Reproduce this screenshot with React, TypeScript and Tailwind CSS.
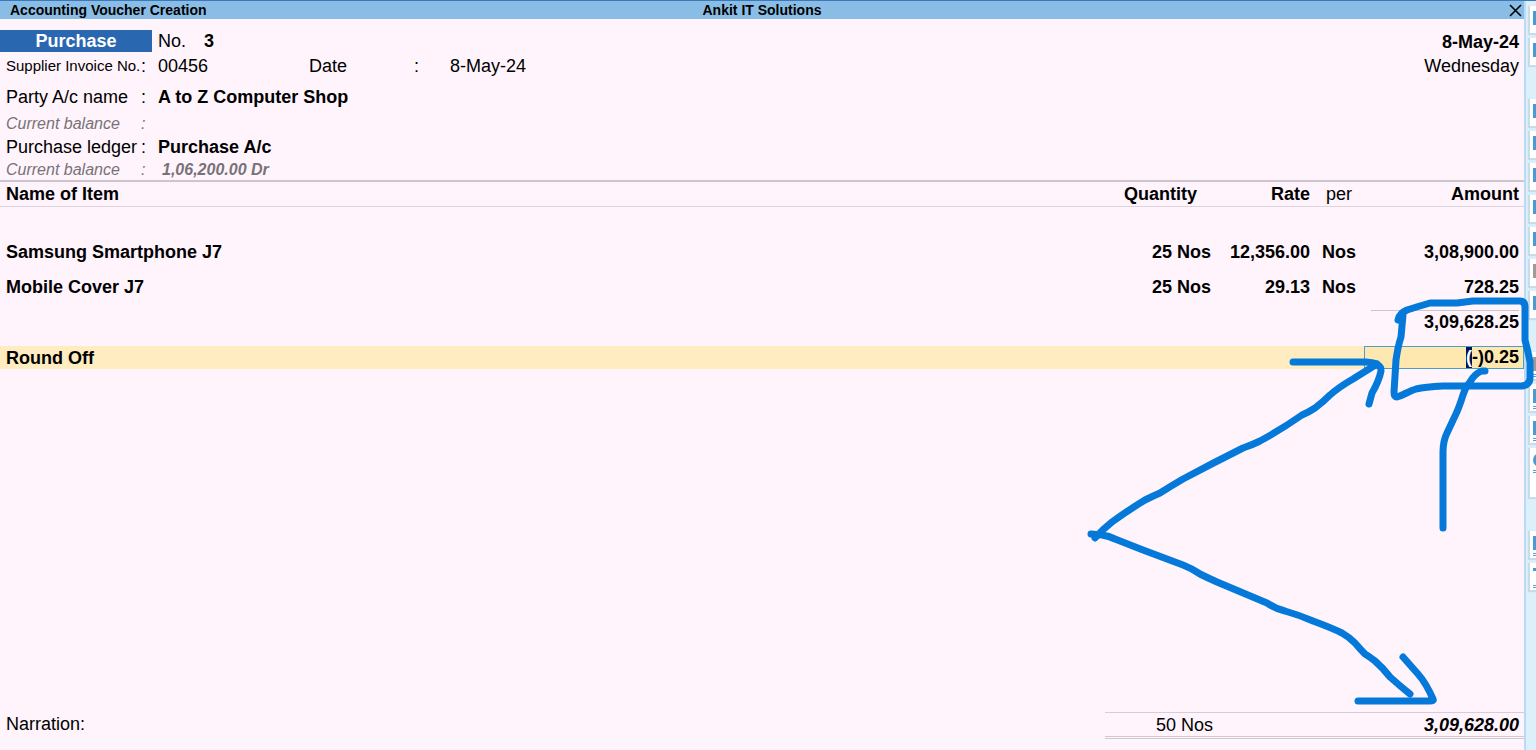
import { useEffect, useRef } from 'react'
import { clsx } from 'clsx'

type Item = {
  name: string
  quantity: string
  rate: string
  per: string
  amount: string
}

type Shortcut = {
  label: string
  className?: string
  icon?: 'bar' | 'muted' | 'round' | 'dash'
  underlined?: boolean
}

const items: Item[] = [
  { name: 'Samsung Smartphone J7', quantity: '25 Nos', rate: '12,356.00', per: 'Nos', amount: '3,08,900.00' },
  { name: 'Mobile Cover J7', quantity: '25 Nos', rate: '29.13', per: 'Nos', amount: '728.25' },
]

const shortcuts: Shortcut[] = [
  { label: 'Date' },
  { label: 'Company' },
  { label: 'Contra', className: 'mt-[29px]' },
  { label: 'Payment' },
  { label: 'Receipt' },
  { label: 'Journal' },
  { label: 'Sales' },
  { label: 'Purchase', icon: 'muted' },
  { label: 'Other vouchers' },
  { label: 'Autofill', className: 'mt-[29px]', icon: 'muted', underlined: true },
  { label: 'Change mode', underlined: true },
  { label: 'More details', underlined: true },
  { label: 'Optional', className: 'h-[49px]', icon: 'round', underlined: true },
  { label: 'Post-dated', className: 'mt-[29px]', underlined: true },
  { label: 'Stock query', icon: 'dash', underlined: true },
]

const inputClass = 'min-w-0 bg-transparent p-0 outline-none'

function ShortcutBar() {
  return (
    <aside className="flex w-3 shrink-0 flex-col gap-[5px] overflow-hidden border-l-2 border-[#bbdaf3] bg-[#dcf0fc] pt-[5px] pl-1">
      {shortcuts.map(({ label, className, icon = 'bar', underlined }) => (
        <button
          key={label}
          type="button"
          aria-label={label}
          className={clsx(
            'flex w-24 shrink-0 flex-col bg-white pt-[5px] pl-[3px] shadow-[-1px_1px_1px_1px_#c9dbe6]',
            className,
            className !== 'h-[49px]' && 'h-[27px]',
          )}
        >
          <span
            className={clsx(
              'block',
              icon === 'bar' && 'h-3.5 w-2 bg-[#4a9ad4]',
              icon === 'muted' && 'h-3.5 w-2 bg-[#a09b9b]',
              icon === 'round' && 'h-3.5 w-3.5 rounded-full bg-[#4a9ad4]',
              icon === 'dash' && 'mb-[11px] h-[3px] w-2 bg-[#4a9ad4]',
            )}
          />
          {underlined && <span className="mt-[3px] block h-[3px] w-20 border-y border-[#4fa3dc]" />}
        </button>
      ))}
    </aside>
  )
}

function Annotations() {
  return (
    <svg
      className="pointer-events-none absolute top-[289px] right-0"
      width="456"
      height="430"
      viewBox="1080 290 456 430"
      fill="none"
      stroke="#0579da"
      strokeWidth="7"
      strokeLinecap="round"
      strokeLinejoin="round"
      aria-hidden="true"
    >
      <path d="M1398 320C1399 314 1403 312 1407 310C1416 307 1423 305 1430 303H1457L1473 301H1520Q1525 301 1525 307V340Q1528 351 1530 362V378Q1530 385 1522 386H1443Q1425 387 1416 389C1409 391 1404 395 1397 397Q1394 397 1394 392L1396 360Q1398 346 1401 337L1403 315" />
      <path d="M1293 362H1366Q1382 363 1381 371Q1379 381 1372 393L1369 404" />
      <path d="M1095 538Q1103 529 1112 522Q1127 511 1145 500Q1153 496 1160 493Q1171 486 1183 479Q1213 463 1243 448Q1252 445 1260 441Q1282 429 1302 415Q1309 412 1315 408Q1323 402 1330 395Q1339 387 1353 379L1377 364" />
      <path d="M1091 534L1102 535Q1109 536 1115 539L1143 550L1183 565Q1191 568 1200 574Q1208 578 1217 582L1267 603Q1276 609 1285 611Q1299 615 1313 621Q1332 628 1342 633Q1349 637 1355 643Q1360 649 1365 654Q1370 657 1375 661Q1383 668 1390 677Q1400 686 1410 694" />
      <path d="M1403 657L1418 674Q1426 683 1433 699Q1434 701 1430 701H1358" />
      <path d="M1485 371H1482Q1475 373 1470 382Q1465 388 1463 395Q1459 408 1455 416L1447 433Q1443 441 1443 452V528" />
    </svg>
  )
}

export default function App() {
  const roundOffRef = useRef<HTMLInputElement>(null)

  useEffect(() => {
    roundOffRef.current?.focus()
    roundOffRef.current?.setSelectionRange(0, 1)
  }, [])

  return (
    <div className="relative flex min-h-screen overflow-hidden border-t border-[#3d78bd] bg-[#fff4fc] font-['Liberation_Sans',Arial,sans-serif] text-lg/[22px] text-black">
      <main className="flex min-w-0 flex-1 flex-col">
        <header className="grid h-[18px] grid-cols-[1fr_auto_1fr] items-center bg-[#8abde5] text-sm/[18px] font-bold">
          <h1 className="pl-2.5">Accounting Voucher Creation</h1>
          <span>Ankit IT Solutions</span>
          <button type="button" aria-label="Close" className="justify-self-end pr-0.5">
            <svg width="13" height="13" viewBox="0 0 13 13" stroke="black" strokeWidth="1.6">
              <path d="M1 1L12 12M12 1L1 12" />
            </svg>
          </button>
        </header>

        <section className="mt-[11px] flex justify-between pr-[5px]">
          <div>
            <div className="flex h-[22px]">
              <h2 className="w-[152px] bg-[#2a67b1] text-center font-bold text-white">Purchase</h2>
              <span className="ml-1.5">No.</span>
              <span className="ml-[18px] font-bold">3</span>
            </div>
            <div className="flex h-7 items-center pl-1.5">
              <label htmlFor="invoice" className="w-[135px] text-[15px]/[22px] whitespace-nowrap">Supplier Invoice No.</label>
              <span className="w-[17px]">:</span>
              <input id="invoice" className={clsx(inputClass, 'w-[151px]')} defaultValue="00456" />
              <label htmlFor="invoice-date" className="w-[105px]">Date</label>
              <span className="w-9">:</span>
              <input id="invoice-date" className={clsx(inputClass, 'w-32')} defaultValue="8-May-24" />
            </div>
            <div className="flex h-[34px] items-center pl-1.5">
              <label htmlFor="party" className="w-[135px]">Party A/c name</label>
              <span className="w-[17px]">:</span>
              <input id="party" className={clsx(inputClass, 'w-80 font-bold')} defaultValue="A to Z Computer Shop" />
            </div>
            <div className="flex h-5 items-center pl-1.5 text-base/5 text-[#777278] italic">
              <span className="w-[135px]">Current balance</span>
              <span>:</span>
            </div>
            <div className="flex h-[26px] items-center pl-1.5">
              <label htmlFor="ledger" className="w-[135px]">Purchase ledger</label>
              <span className="w-[17px]">:</span>
              <input id="ledger" className={clsx(inputClass, 'w-80 font-bold')} defaultValue="Purchase A/c" />
            </div>
            <div className="flex h-5 items-center pl-1.5 text-base/5 text-[#777278] italic">
              <span className="w-[135px]">Current balance</span>
              <span className="w-[21px]">:</span>
              <span className="font-bold">1,06,200.00 Dr</span>
            </div>
          </div>
          <div className="pt-px text-right">
            <p className="font-bold">8-May-24</p>
            <p className="pt-0.5">Wednesday</p>
          </div>
        </section>

        <table className="w-full table-fixed font-bold">
          <colgroup>
            <col />
            <col className="w-[120px]" />
            <col className="w-[99px]" />
            <col className="w-[54px]" />
            <col className="w-[160px]" />
          </colgroup>
          <thead>
            <tr className="h-[25px] border-t-2 border-b border-t-[#cbc6cc] border-b-[#dbd4dc]">
              <th className="pl-1.5 text-left">Name of Item</th>
              <th className="pr-3.5 text-right">Quantity</th>
              <th className="text-right">Rate</th>
              <th className="pr-0.5 pl-1.5 text-center font-normal">per</th>
              <th className="pr-[5px] text-right">Amount</th>
            </tr>
          </thead>
          <tbody>
            <tr className="h-7">
              <td colSpan={5} />
            </tr>
            {items.map((item) => (
              <tr key={item.name} className="h-[35px]">
                <td className="pl-1.5">{item.name}</td>
                <td className="text-right">{item.quantity}</td>
                <td className="text-right">{item.rate}</td>
                <td className="pl-3">{item.per}</td>
                <td className="pr-[5px] text-right">{item.amount}</td>
              </tr>
            ))}
            <tr className="h-[42px] align-top">
              <td colSpan={4} />
              <td className="pt-1.5 pr-[5px] pl-[7px] text-right">
                <div className="border-t border-[#cbc6cc]">3,09,628.25</div>
              </td>
            </tr>
            <tr className="bg-[#ffecc0]">
              <td colSpan={4} className="pl-1.5">
                <label htmlFor="round-off">Round Off</label>
              </td>
              <td className="p-0">
                <input
                  ref={roundOffRef}
                  id="round-off"
                  className="block h-[23px] w-full border border-[#4a9fc8] bg-[#ffe7b0] pr-1 text-right outline-none selection:bg-[#00145a] selection:text-white"
                  defaultValue="(-)0.25"
                />
              </td>
            </tr>
          </tbody>
        </table>

        <footer className="mt-auto flex items-start justify-between pb-[11px]">
          <div className="flex flex-1 pt-px pl-1.5">
            <label htmlFor="narration">Narration:</label>
            <input id="narration" className={clsx(inputClass, 'ml-2 flex-1')} />
          </div>
          <div className="w-[419px]">
            <div className="flex justify-between border-t border-[#d5ced6] pt-px pr-[5px] pl-[51px]">
              <span>50 Nos</span>
              <span className="font-bold italic">3,09,628.00</span>
            </div>
            <div className="h-[3px] border-y border-[#d0c9d1]" />
          </div>
        </footer>
      </main>

      <ShortcutBar />
      <Annotations />
    </div>
  )
}
